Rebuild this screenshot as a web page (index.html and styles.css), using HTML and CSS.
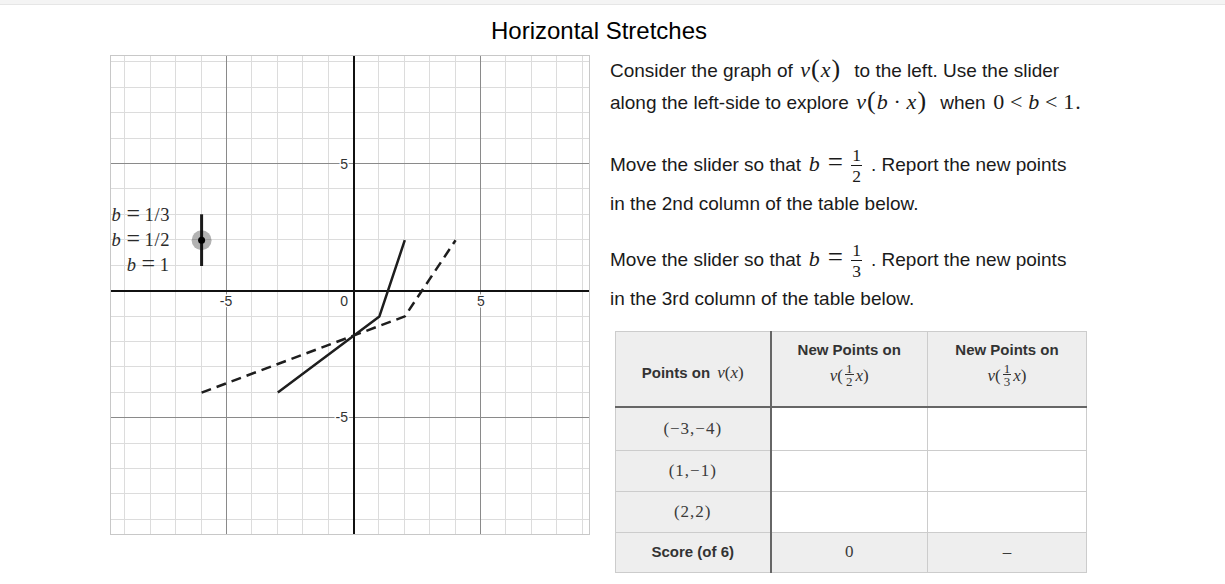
FILE: index.html
```html
<!DOCTYPE html>
<html lang="en">
<head>
<meta charset="utf-8">
<title>Horizontal Stretches</title>
<link rel="stylesheet" href="styles.css">
</head>
<body>
<div class="topbar"></div>
<div class="page">
  <h1 class="title">Horizontal Stretches</h1>
  <div class="main">
    <div class="graph">
      <svg width="480" height="480" viewBox="0 0 480 480">
        <rect class="bg" x="0" y="0" width="480" height="480"/>
        <path class="minor" d="M14.5 0V480M40.5 0V480M65.5 0V480M91.5 0V480M141.5 0V480M167.5 0V480M192.5 0V480M218.5 0V480M268.5 0V480M294.5 0V480M319.5 0V480M345.5 0V480M395.5 0V480M421.5 0V480M446.5 0V480M472.5 0V480M0 6.5H480M0 32.5H480M0 57.5H480M0 83.5H480M0 133.5H480M0 159.5H480M0 184.5H480M0 210.5H480M0 261.5H480M0 286.5H480M0 311.5H480M0 337.5H480M0 388.5H480M0 413.5H480M0 438.5H480M0 464.5H480"/>
        <path class="major" d="M116.5 0V480M370.5 0V480M0 108.5H480M0 362.5H480"/>
        <path class="axis" d="M244 0V480M0 236H480"/>
        <text class="tick" x="238" y="113.5" text-anchor="end">5</text>
        <text class="tick" x="238" y="367" text-anchor="end">-5</text>
        <text class="tick" x="238" y="251" text-anchor="end">0</text>
        <text class="tick" x="371" y="251" text-anchor="middle">5</text>
        <text class="tick" x="116" y="251" text-anchor="middle">-5</text>
        <polyline class="curve dashed" points="91.6,337.6 294.8,261.4 345.6,185.2"/>
        <polyline class="curve" points="167.8,337.6 269.4,261.4 294.8,185.2"/>
        <line class="track" x1="91.6" y1="159.3" x2="91.6" y2="211"/>
        <circle class="halo" cx="91.6" cy="185.2" r="10"/>
        <circle class="dot" cx="91.6" cy="185.2" r="3.5"/>
        <text class="blabel" x="60" y="166" text-anchor="end"><tspan class="bvar">b</tspan><tspan class="beq" dx="5">=</tspan><tspan dx="4">1/3</tspan></text>
        <text class="blabel" x="60" y="191" text-anchor="end"><tspan class="bvar">b</tspan><tspan class="beq" dx="5">=</tspan><tspan dx="4">1/2</tspan></text>
        <text class="blabel" x="59.5" y="215.5" text-anchor="end"><tspan class="bvar">b</tspan><tspan class="beq" dx="5">=</tspan><tspan dx="4">1</tspan></text>
        <rect class="frame" x="0.5" y="0.5" width="479" height="479"/>
      </svg>
    </div>
    <div class="content">
      <p class="p1">Consider the graph of <span class="m"><i>v</i><span class="par">(</span><i>x</i><span class="par">)</span></span> to the left. Use the slider<br>along the left-side to explore <span class="m"><i>v</i><span class="par">(</span><i>b</i><span class="op">·</span><i>x</i><span class="par">)</span></span> when <span class="m">0<span class="op">&lt;</span><i>b</i><span class="op">&lt;</span>1.</span></p>
      <p class="p2">Move the slider so that <span class="m"><i>b</i><span class="op eq">=</span><span class="frac"><span class="num">1</span><span class="den">2</span></span></span>. Report the new points<br>in the 2nd column of the table below.</p>
      <p class="p3">Move the slider so that <span class="m"><i>b</i><span class="op eq">=</span><span class="frac"><span class="num">1</span><span class="den">3</span></span></span>. Report the new points<br>in the 3rd column of the table below.</p>
      <table class="points">
        <colgroup>
          <col class="w1">
          <col class="w2">
          <col class="w3">
        </colgroup>
        <thead>
          <tr>
            <th class="c1 hfirst">Points on <span class="hmv"><i>v</i>(<i>x</i>)</span></th>
            <th><div class="ht">New Points on</div><div class="hm"><i>v</i>(<span class="sfrac"><span class="snum">1</span><span class="sden">2</span></span><i>x</i>)</div></th>
            <th><div class="ht">New Points on</div><div class="hm"><i>v</i>(<span class="sfrac"><span class="snum">1</span><span class="sden">3</span></span><i>x</i>)</div></th>
          </tr>
        </thead>
        <tbody>
          <tr class="r1"><td class="c1 pt">(−3,−4)</td><td></td><td></td></tr>
          <tr class="r2"><td class="c1 pt">(1,−1)</td><td></td><td></td></tr>
          <tr class="r3"><td class="c1 pt">(2,2)</td><td></td><td></td></tr>
          <tr class="score"><td class="c1 sl">Score (of 6)</td><td class="sv">0</td><td class="sv">–</td></tr>
        </tbody>
      </table>
    </div>
  </div>
</div>
</body>
</html>
```
FILE: styles.css
```css
* {
  box-sizing: border-box;
}

body {
  margin: 0;
  background: #fff;
  color: #1a1a1a;
  font-family: "Liberation Sans", Arial, sans-serif;
}

.topbar {
  height: 5px;
  background: #f4f4f4;
  border-bottom: 1px solid #e6e6e6;
}

.page {
  margin-left: 110px;
  width: 978px;
}

.title {
  margin: 12px 0 10px;
  font-size: 24px;
  font-weight: normal;
  line-height: 28px;
  text-align: center;
  color: #000;
}

.main {
  display: flex;
  align-items: flex-start;
  gap: 20px;
}

.graph svg {
  display: block;
}

.bg { fill: #fff; }
.frame { fill: none; stroke: #c8c8c8; stroke-width: 1; }
.minor { fill: none; stroke: #dcdcdc; stroke-width: 1; }
.major { fill: none; stroke: #8a8a8a; stroke-width: 1; }
.axis { fill: none; stroke: #111; stroke-width: 2; }

.tick {
  font-family: "Liberation Sans", Arial, sans-serif;
  font-size: 14px;
  fill: #333;
  stroke: #fff;
  stroke-width: 3px;
  paint-order: stroke;
}

.curve {
  fill: none;
  stroke: #1e1e1e;
  stroke-width: 2.5;
  stroke-linejoin: round;
}

.dashed {
  stroke-dasharray: 10 6;
}

.track {
  stroke: #1a1a1a;
  stroke-width: 3;
}

.halo { fill: #000; fill-opacity: 0.3; }
.dot { fill: #000; }

.blabel {
  font-family: "Liberation Serif", "Times New Roman", serif;
  font-size: 18.5px;
  fill: #2a2a2a;
  letter-spacing: 0.6px;
}

.beq { font-size: 24px; }

.bvar { font-style: italic; }

.content {
  width: 480px;
  font-size: 19px;
  line-height: 31.5px;
}

.content p {
  margin: 0;
  white-space: nowrap;
}

.p1 { margin-bottom: 30px !important; }
.p2 { margin-bottom: 23.5px !important; }
.p3 { margin-bottom: 16px !important; }

.m {
  font-family: "Liberation Serif", "Times New Roman", serif;
  font-size: 22px;
  line-height: 1;
  letter-spacing: 1px;
  margin: 0 0.36em 0 0.1em;
}

.m i { font-style: italic; }

.par { font-size: 26px; }

.op { margin: 0 0.22em; }

.eq { font-size: 27px; margin: 0 0.24em 0 0.26em; }

.frac {
  display: inline-flex;
  flex-direction: column;
  align-items: center;
  vertical-align: 10.3px;
  font-size: 17.5px;
  line-height: 15px;
  letter-spacing: 0;
  margin: 0 1px 4px;
}

.num {
  padding: 0 1px 2px;
  border-bottom: 1px solid currentColor;
}

.den {
  padding: 3px 1px 0;
}

.points {
  margin-left: 5px;
  width: 471px;
  border-collapse: collapse;
  table-layout: fixed;
  color: #3a3a3a;
}

.w1 { width: 155px; }
.w2 { width: 157px; }
.w3 { width: 159px; }

.points th,
.points td {
  border: 1px solid #ccc;
  padding: 0;
  text-align: center;
}

.points th {
  height: 76px;
  background: #eee;
  vertical-align: top;
  padding-top: 9px;
  font-size: 15px;
  font-weight: bold;
  line-height: 18px;
  color: #333;
  border-bottom: 2px solid #666;
}

.points th.hfirst {
  padding-top: 32px;
}

.points .c1 {
  border-right: 2px solid #666;
  background: #eee;
}

.hmv {
  font-family: "Liberation Serif", "Times New Roman", serif;
  font-weight: normal;
  font-size: 17px;
  margin-left: 3px;
}

.hmv i, .hm i { font-style: italic; }

.ht {
  height: 18px;
}

.hm {
  margin-top: 2px;
  height: 30px;
  line-height: 30px;
  font-family: "Liberation Serif", "Times New Roman", serif;
  font-weight: normal;
  font-size: 17px;
}

.sfrac {
  display: inline-flex;
  flex-direction: column;
  align-items: center;
  vertical-align: 7.3px;
  font-size: 13px;
  line-height: 11px;
  margin: 0 2px;
}

.snum {
  padding: 0 1px;
  border-bottom: 1px solid currentColor;
}

.sden {
  padding: 1px 1px 0;
}

.points td {
  vertical-align: middle;
  background: #fff;
}

.r1 td { height: 43px; }
.r2 td, .r3 td { height: 41px; }
.score td { height: 40px; background: #eee; }

.pt {
  font-family: "Liberation Serif", "Times New Roman", serif;
  font-size: 17px;
  line-height: 20px;
  letter-spacing: 1px;
}

.sl {
  font-size: 15px;
  font-weight: bold;
  line-height: 18px;
  color: #333;
}

.sv {
  font-family: "Liberation Serif", "Times New Roman", serif;
  font-size: 17px;
  line-height: 20px;
}
```
